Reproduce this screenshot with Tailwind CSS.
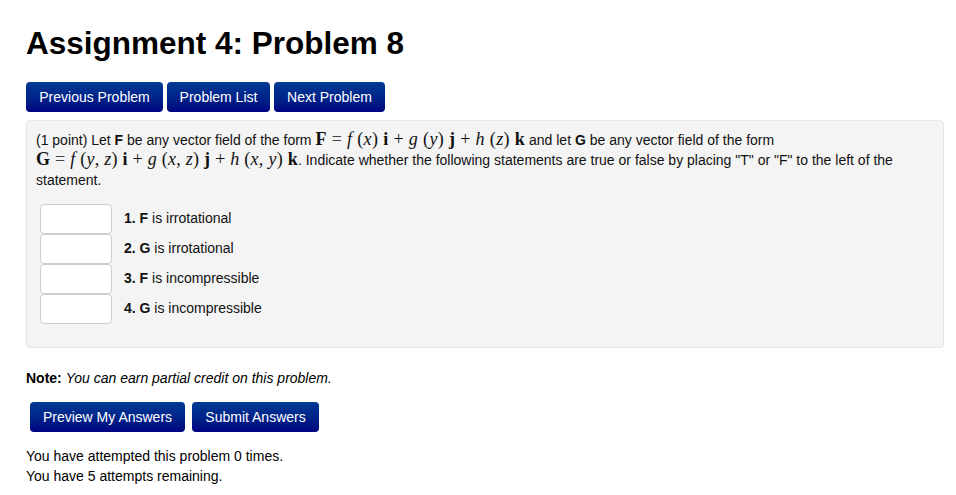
<!DOCTYPE html>
<html lang="en">
<head>
    <meta charset="UTF-8">
    <script src="https://cdn.jsdelivr.net/npm/@tailwindcss/browser@4"></script>
    <title>Assignment 4: Problem 8</title>
</head>
<body class="bg-white text-black font-['Liberation_Sans',Arial,sans-serif] text-[14px] leading-[20px] overflow-hidden">
    <div class="px-[26px] w-[970px] pr-[44px]">
        <h1 class="pt-[23px] h-[82px] text-[31.5px] leading-[40px] font-bold">Assignment 4: Problem 8</h1>

        <div class="flex h-[30px]">
            <a href="#" class="w-[137px] flex items-center justify-center rounded-[4px] bg-gradient-to-b from-[#003a94] to-[#000080] text-white">Previous Problem</a>
            <a href="#" class="ml-[4px] w-[103px] flex items-center justify-center rounded-[4px] bg-gradient-to-b from-[#003a94] to-[#000080] text-white">Problem List</a>
            <a href="#" class="ml-[4px] w-[111px] flex items-center justify-center rounded-[4px] bg-gradient-to-b from-[#003a94] to-[#000080] text-white">Next Problem</a>
        </div>

        <div class="mt-[8px] w-[918px] h-[228px] bg-[#f4f4f4] border border-[#e6e6e6] rounded-[4px] pl-[9px] pt-[9px] text-[#111]">
            <p class="w-[880px]">
                (1 point) Let <b>F</b> be any vector field of the form
                <span class="font-['Liberation_Serif',serif] text-[18px] leading-none tracking-[0.36px]"><b>F</b> <span class="text-[#444]">=</span> <i>f</i> (<i>x</i>) <b>i</b> + <i>g</i> (<i>y</i>) <b>j</b> + <i>h</i> (<i>z</i>) <b>k</b></span>
                and let <b>G</b> be any vector field of the form<br>
                <span class="font-['Liberation_Serif',serif] text-[18px] leading-none tracking-[0.26px]"><b>G</b> <span class="text-[#444]">=</span> <i>f</i> (<i>y</i>, <i>z</i>) <b>i</b> + <i>g</i> (<i>x</i>, <i>z</i>) <b>j</b> + <i>h</i> (<i>x</i>, <i>y</i>) <b>k</b></span>.
                Indicate whether the following statements are true or false by placing "T" or "F" to the left of the statement.
            </p>

            <div class="mt-[14px] ml-[4px] flex flex-col">
                <div class="flex h-[30px]">
                    <input type="text" class="w-[72px] h-[30px] bg-white border border-[#cccccc] rounded-[4px]">
                    <span class="ml-[12px] pt-[4px]"><b>1. F</b> is irrotational</span>
                </div>
                <div class="flex h-[30px]">
                    <input type="text" class="w-[72px] h-[30px] bg-white border border-[#cccccc] rounded-[4px]">
                    <span class="ml-[12px] pt-[4px]"><b>2. G</b> is irrotational</span>
                </div>
                <div class="flex h-[30px]">
                    <input type="text" class="w-[72px] h-[30px] bg-white border border-[#cccccc] rounded-[4px]">
                    <span class="ml-[12px] pt-[4px]"><b>3. F</b> is incompressible</span>
                </div>
                <div class="flex h-[30px]">
                    <input type="text" class="w-[72px] h-[30px] bg-white border border-[#cccccc] rounded-[4px]">
                    <span class="ml-[12px] pt-[4px]"><b>4. G</b> is incompressible</span>
                </div>
            </div>
        </div>

        <p class="mt-[20px]"><b>Note:</b> <i>You can earn partial credit on this problem.</i></p>

        <div class="mt-[14px] ml-[4px] flex h-[30px]">
            <a href="#" class="w-[155px] flex items-center justify-center rounded-[4px] bg-gradient-to-b from-[#003a94] to-[#000080] text-white">Preview My Answers</a>
            <a href="#" class="ml-[7px] w-[127px] flex items-center justify-center rounded-[4px] bg-gradient-to-b from-[#003a94] to-[#000080] text-white">Submit Answers</a>
        </div>

        <p class="mt-[14px]">You have attempted this problem 0 times.<br>You have 5 attempts remaining.</p>
    </div>
</body>
</html>
